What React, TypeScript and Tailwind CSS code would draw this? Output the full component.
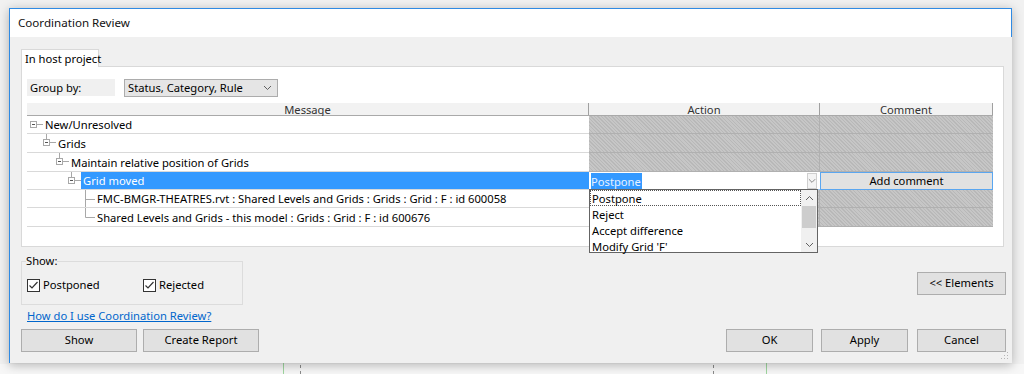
import React from "react";

const HATCH =
  "bg-[repeating-linear-gradient(45deg,#b8b8b8_0px,#b8b8b8_1px,#c6c6c6_1px,#c6c6c6_2.5px)]";

function Exp({ line, w = 15 }: { line: boolean; w?: number }) {
  return (
    <svg width={w} height="18" className="shrink-0">
      {line && <line x1="3.5" y1="0" x2="3.5" y2="5" stroke="#a8a8a8" />}
      <rect x="0.5" y="5.5" width="6" height="6" fill="white" stroke="#a8a8a8" />
      <line x1="2" y1="8.5" x2="5" y2="8.5" stroke="#555" />
      <line x1="7" y1="8.5" x2="13" y2="8.5" stroke="#a8a8a8" />
    </svg>
  );
}

function Leaf({ last }: { last: boolean }) {
  return (
    <svg width="15" height="18" className="shrink-0">
      <line x1="3.5" y1="0" x2="3.5" y2={last ? 9.5 : 18} stroke="#a8a8a8" />
      <line x1="3.5" y1="9.5" x2="13" y2="9.5" stroke="#a8a8a8" />
    </svg>
  );
}

function Row({
  h,
  msg,
  action,
  comment,
}: {
  h: string;
  msg: React.ReactNode;
  action?: React.ReactNode;
  comment?: React.ReactNode;
}) {
  return (
    <div className={`flex ${h}`}>
      <div className="w-[562px] border-b border-[#d9d9d9] bg-white overflow-hidden">{msg}</div>
      {action ?? <div className={`w-[231px] border-b border-r border-[#b0b0b0] ${HATCH}`} />}
      {comment ?? <div className={`w-[173px] border-b border-[#b0b0b0] ${HATCH}`} />}
    </div>
  );
}

function Chevron({ dir = "down", color = "#606060" }: { dir?: "down" | "up"; color?: string }) {
  return (
    <svg width="9" height="6" viewBox="0 0 9 6">
      <polyline
        points={dir === "down" ? "1,1 4.5,4.5 8,1" : "1,5 4.5,1.5 8,5"}
        fill="none"
        stroke={color}
        strokeWidth="1"
      />
    </svg>
  );
}

function CheckBox({ label }: { label: string }) {
  return (
    <div className="flex items-center h-[14px]">
      <div className="w-[13px] h-[13px] border border-[#333] bg-white flex items-center justify-center">
        <svg width="11" height="11" viewBox="0 0 11 11">
          <polyline points="1.5,5.5 4,8 9.5,2" fill="none" stroke="#333" strokeWidth="1.2" />
        </svg>
      </div>
      <span className="ml-[3px]">{label}</span>
    </div>
  );
}

function Btn({ w, h = "h-[23px]", children }: { w: string; h?: string; children: React.ReactNode }) {
  return (
    <div
      className={`${w} ${h} bg-[#e1e1e1] border border-[#adadad] flex items-center justify-center text-black`}
    >
      {children}
    </div>
  );
}

export default function App() {
  return (
    <div className="w-[1024px] h-[374px] bg-[#f1f1f1] overflow-hidden relative pl-[9px] pt-[8px] [font-family:'Noto_Sans',sans-serif] text-[11.2px] text-black">
      {/* canvas strokes below the dialog */}
      <div className="absolute left-0 top-[364px] w-[1024px] h-[10px] bg-[#f7f7f7]" />
      <div className="absolute left-[283px] top-[363px] w-px h-[11px] bg-[#9fd69f]" />
      <div className="absolute left-[300px] top-[365px] h-[9px] border-l border-dashed border-[#8a8a8a]" />
      <div className="absolute left-[713px] top-[365px] h-[9px] border-l border-dashed border-[#8a8a8a]" />
      <div className="absolute left-[766px] top-[363px] w-px h-[11px] bg-[#9fd69f]" />

      <div className="relative w-[1003px] h-[355px] border-l border-t border-[#2f8ae3] flex flex-col shadow-[0_2px_10px_rgba(0,0,0,0.28)]">
        {/* Title bar */}
        <div className="h-[28px] bg-white border-r border-[#2f8ae3] flex items-center pl-[8px] text-[11.6px] text-[#111]">
          Coordination Review
        </div>

        {/* Body */}
        <div className="flex-1 bg-[#f0f0f0] pl-[11px] pr-[6px] flex flex-col">
          <div className="mr-[2px] mt-[12px]">
            <div className="relative z-10 w-[78px] h-[18px] -mb-px bg-white border border-b-0 border-[#d9d9d9] pl-[3px] leading-[17px] whitespace-nowrap">
              In host project
            </div>
            <div className="h-[181px] bg-white border border-[#d9d9d9] pt-[12px] pl-[5px]">
              {/* Group by */}
              <div className="flex h-[18px]">
                <div className="w-[88px] h-[17px] bg-[#f0f0f0] pl-[3px] leading-[18px]">Group by:</div>
                <div className="ml-[9px] w-[154px] h-[18px] bg-[#e5e5e5] border border-[#acacac] flex items-center pl-[3px] pr-[5px]">
                  <span className="flex-1 leading-[16px]">Status, Category, Rule</span>
                  <Chevron />
                </div>
              </div>

              {/* Grid */}
              <div className="mt-[6px] w-[966px]">
                <div className="flex h-[13px] bg-[#f2f2f2] border-b border-[#a9a9a9] text-[#333] leading-[14px]">
                  <div className="w-[562px] text-center border-r border-[#a0a0a0]">Message</div>
                  <div className="w-[231px] text-center border-r border-[#a0a0a0]">Action</div>
                  <div className="w-[173px] text-center border-r border-[#a0a0a0]">Comment</div>
                </div>

                <Row
                  h="h-[18px]"
                  msg={
                    <div className="flex items-center h-full pl-[3px]">
                      <Exp line={false} />
                      <span className="pt-[2px]">New/Unresolved</span>
                    </div>
                  }
                />
                <Row
                  h="h-[19px]"
                  msg={
                    <div className="flex items-center h-full pl-[16px]">
                      <Exp line={true} />
                      <span className="pt-[2px]">Grids</span>
                    </div>
                  }
                />
                <Row
                  h="h-[19px]"
                  msg={
                    <div className="flex items-center h-full pl-[29px]">
                      <Exp line={true} />
                      <span className="pt-[2px]">Maintain relative position of Grids</span>
                    </div>
                  }
                />
                <Row
                  h="h-[18px]"
                  msg={
                    <div className="flex items-center h-full pl-[41px]">
                      <Exp line={true} w={13} />
                      <div className="flex-1 h-full bg-[#3399ff] text-white pl-[2px] pt-[1px] flex items-center">
                        Grid moved
                      </div>
                    </div>
                  }
                  action={
                    <div className="w-[231px] border-b border-[#9cc7f3] relative bg-white">
                      <div className="flex items-center h-full pr-[3px]">
                        <span className="ml-[2px] h-[16px] leading-[17px] bg-[#3399ff] text-[#e8f2ff] pr-[1px]">
                          Postpone
                        </span>
                        <span className="flex-1" />
                        <div className="w-[10px] h-[16px] bg-[#f4f4f4] border border-[#cfcfcf] flex items-center justify-center">
                          <Chevron color="#7a7a7a" />
                        </div>
                      </div>
                      {/* open list */}
                      <div className="absolute top-full left-0 z-20 w-[229px] h-[64px] bg-white border border-[#646464] flex">
                        <div className="flex-1 flex flex-col">
                          <div className="h-[16px] leading-[15px] pl-[1px] border border-dotted border-[#555]">
                            Postpone
                          </div>
                          <div className="h-[16px] leading-[17px] pl-[2px]">Reject</div>
                          <div className="h-[16px] leading-[17px] pl-[2px]">Accept difference</div>
                          <div className="h-[15px] leading-[17px] pl-[2px]">Modify Grid 'F'</div>
                        </div>
                        <div className="w-[16px] bg-[#f0f0f0] flex flex-col items-center">
                          <div className="h-[16px] flex items-center justify-center">
                            <Chevron dir="up" />
                          </div>
                          <div className="w-[14px] h-[22px] bg-[#cdcdcd]" />
                          <div className="flex-1" />
                          <div className="h-[14px] flex items-center justify-center">
                            <Chevron />
                          </div>
                        </div>
                      </div>
                    </div>
                  }
                  comment={
                    <div className="w-[173px] border border-[#5aa6f0] bg-[#e1e1e1] flex items-center justify-center pt-[1px]">
                      Add comment
                    </div>
                  }
                />
                <Row
                  h="h-[18px]"
                  msg={
                    <div className="flex items-center h-full pl-[55px]">
                      <Leaf last={false} />
                      <span className="whitespace-nowrap pt-[2px]">
                        FMC-BMGR-THEATRES.rvt : Shared Levels and Grids : Grids : Grid : F : id 600058
                      </span>
                    </div>
                  }
                />
                <Row
                  h="h-[19px]"
                  msg={
                    <div className="flex items-center h-full pl-[55px]">
                      <Leaf last={true} />
                      <span className="whitespace-nowrap pt-[2px]">
                        Shared Levels and Grids - this model : Grids : Grid : F : id 600676
                      </span>
                    </div>
                  }
                />
              </div>
            </div>
          </div>

          {/* Show group + Elements */}
          <div className="mt-[14px] flex justify-between items-start">
            <div className="relative w-[222px] h-[44px] border border-[#dcdcdc] pt-[16px] pl-[5px] flex">
              <span className="absolute -top-[8px] left-[4px] bg-[#f0f0f0] leading-[14px]">Show:</span>
              <div className="w-[116px]">
                <CheckBox label="Postponed" />
              </div>
              <CheckBox label="Rejected" />
            </div>
            <div className="mt-[11px]">
              <Btn w="w-[89px]">&lt;&lt; Elements</Btn>
            </div>
          </div>

          <div className="mt-[3px] ml-[6px] leading-[16px] h-[16px]">
            <span className="text-[#0066cc] underline">How do I use Coordination Review?</span>
          </div>

          <div className="mt-[5px] flex">
            <Btn w="w-[116px]">Show</Btn>
            <div className="ml-[6px]">
              <Btn w="w-[116px]">Create Report</Btn>
            </div>
            <div className="flex-1" />
            <Btn w="w-[87px]">OK</Btn>
            <div className="ml-[8px]">
              <Btn w="w-[87px]">Apply</Btn>
            </div>
            <div className="ml-[9px]">
              <Btn w="w-[89px]">Cancel</Btn>
            </div>
          </div>
        </div>

        {/* resize grip */}
        <svg className="absolute right-[3px] bottom-[3px]" width="8" height="8" viewBox="0 0 8 8">
          <rect x="6" y="0" width="1" height="1" fill="#b5b5b5" />
          <rect x="3" y="3" width="1" height="1" fill="#b5b5b5" />
          <rect x="6" y="3" width="1" height="1" fill="#b5b5b5" />
          <rect x="0" y="6" width="1" height="1" fill="#b5b5b5" />
          <rect x="3" y="6" width="1" height="1" fill="#b5b5b5" />
          <rect x="6" y="6" width="1" height="1" fill="#b5b5b5" />
        </svg>
      </div>
    </div>
  );
}
